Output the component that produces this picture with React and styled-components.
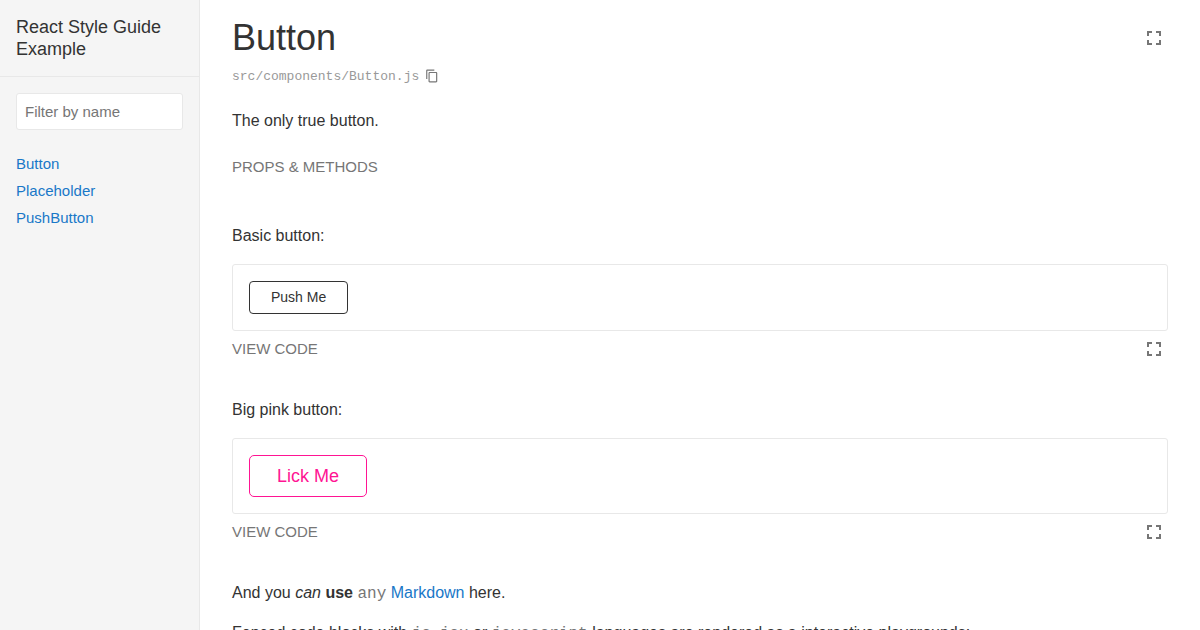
import React, { useState } from 'react';
import styled, { createGlobalStyle } from 'styled-components';
import { MdContentCopy, MdFullscreen } from 'react-icons/md';

const GlobalStyle = createGlobalStyle`
  * {
    box-sizing: border-box;
  }

  body {
    margin: 0;
    background: #fff;
    color: #333;
    font-family: Helvetica, "Liberation Sans", sans-serif;
    font-size: 16px;
  }
`;

const Layout = styled.div`
  display: flex;
  height: 100vh;
`;

const Sidebar = styled.aside`
  flex: 0 0 200px;
  background: #f5f5f5;
  border-right: 1px solid #e8e8e8;
  overflow: auto;
`;

const Logo = styled.h1`
  margin: 0;
  padding: 16px;
  border-bottom: 1px solid #e8e8e8;
  font-size: 18px;
  font-weight: 400;
  line-height: 22px;
`;

const Search = styled.div`
  padding: 16px;
`;

const SearchInput = styled.input`
  display: block;
  width: 100%;
  height: 37px;
  padding: 8px;
  background: #fff;
  border: 1px solid #e8e8e8;
  border-radius: 3px;
  color: #333;
  font-family: inherit;
  font-size: 15px;

  &::placeholder {
    color: #767676;
  }

  &:focus {
    border-color: #1673b1;
    outline: 0;
  }
`;

const Link = styled.a`
  color: #1978c8;
  text-decoration: none;

  &:hover {
    color: #f28a25;
  }
`;

const NavList = styled.ul`
  display: flex;
  flex-direction: column;
  gap: 8px;
  margin: 0;
  padding: 8px 16px;
  list-style: none;
  font-size: 15px;
  line-height: 19px;
`;

const Content = styled.main`
  flex: 1;
  min-width: 0;
  padding: 16px 32px;
  overflow: hidden;
`;

const Header = styled.header`
  margin-bottom: 25px;
`;

const TitleRow = styled.div`
  display: flex;
  align-items: center;
  justify-content: space-between;
`;

const Title = styled.h2`
  margin: 0;
  font-size: 36px;
  font-weight: 400;
  line-height: 44px;
`;

const Pathline = styled.div`
  display: flex;
  align-items: center;
  gap: 6px;
  height: 16px;
  margin-top: 8px;
  color: #999;
  font-family: Courier, "Liberation Mono", monospace;
  font-size: 13px;
`;

const IconButton = styled.button`
  display: flex;
  padding: ${props => (props.$flush ? '0' : '2px')};
  background: transparent;
  border: 0;
  color: #767676;
  font-size: ${props => (props.$flush ? '14px' : '24px')};
  cursor: pointer;

  &:hover {
    color: #333;
  }
`;

const Para = styled.p`
  margin: 0 0 16px;
  line-height: 24px;
`;

const TabButton = styled.button`
  padding: 0;
  background: transparent;
  border: 0;
  color: #767676;
  font-family: inherit;
  font-size: 15px;
  line-height: 28px;
  text-transform: uppercase;
  cursor: pointer;

  &:hover {
    color: #333;
  }
`;

const Methods = styled.div`
  margin: 20px 0 43px;
`;

const Playground = styled.section`
  margin-bottom: 35px;
`;

const Preview = styled.div`
  display: flex;
  padding: 16px;
  border: 1px solid #e8e8e8;
  border-radius: 3px;
`;

const Controls = styled.div`
  display: flex;
  align-items: center;
  justify-content: space-between;
  height: 28px;
  margin-top: 4px;
`;

const DemoButton = styled.button`
  padding: ${props => (props.$large ? '10px 27px' : '8px 21px')};
  background: #fff;
  border: 1px solid ${props => props.$color};
  border-radius: ${props => (props.$large ? '5px' : '4px')};
  color: ${props => props.$color};
  font-family: "Liberation Sans", Arial, sans-serif;
  font-size: ${props => (props.$large ? '18px' : '14px')};
  line-height: ${props => (props.$large ? '20px' : '15px')};
  cursor: pointer;
`;

const Code = styled.code`
  color: #767676;
  font-family: Courier, "Liberation Mono", monospace;
  font-size: 16px;
  line-height: 16px;
`;

const components = ['Button', 'Placeholder', 'PushButton'];

const examples = [
  { text: 'Basic button:', label: 'Push Me', color: '#333' },
  { text: 'Big pink button:', label: 'Lick Me', color: 'deeppink', large: true },
];

const FullscreenButton = () => (
  <IconButton type="button" aria-label="Open isolated">
    <MdFullscreen />
  </IconButton>
);

const App = () => {
  const [filter, setFilter] = useState('');

  const visible = components.filter(name =>
    name.toLowerCase().includes(filter.toLowerCase())
  );

  return (
    <>
      <GlobalStyle />
      <Layout>
        <Sidebar>
          <Logo>React Style Guide Example</Logo>
          <Search>
            <SearchInput
              aria-label="Filter by name"
              placeholder="Filter by name"
              value={filter}
              onChange={event => setFilter(event.target.value)}
            />
          </Search>
          <nav>
            <NavList>
              {visible.map(name => (
                <li key={name}>
                  <Link href={`#${name.toLowerCase()}`}>{name}</Link>
                </li>
              ))}
            </NavList>
          </nav>
        </Sidebar>

        <Content>
          <Header>
            <TitleRow>
              <Title id="button">Button</Title>
              <FullscreenButton />
            </TitleRow>
            <Pathline>
              src/components/Button.js
              <IconButton type="button" $flush aria-label="Copy to clipboard">
                <MdContentCopy />
              </IconButton>
            </Pathline>
          </Header>

          <Para>The only true button.</Para>
          <Methods>
            <TabButton type="button">Props &amp; methods</TabButton>
          </Methods>

          {examples.map(example => (
            <React.Fragment key={example.label}>
              <Para>{example.text}</Para>
              <Playground>
                <Preview>
                  <DemoButton type="button" $color={example.color} $large={example.large}>
                    {example.label}
                  </DemoButton>
                </Preview>
                <Controls>
                  <TabButton type="button">View code</TabButton>
                  <FullscreenButton />
                </Controls>
              </Playground>
            </React.Fragment>
          ))}

          <Para>
            And you <em>can</em> <strong>use</strong> <Code>any</Code>{' '}
            <Link href="http://daringfireball.net/projects/markdown/">Markdown</Link> here.
          </Para>
          <Para>
            Fenced code blocks with <Code>js</Code>, <Code>jsx</Code> or <Code>javascript</Code>{' '}
            languages are rendered as a interactive playgrounds:
          </Para>
        </Content>
      </Layout>
    </>
  );
};

export default App;
